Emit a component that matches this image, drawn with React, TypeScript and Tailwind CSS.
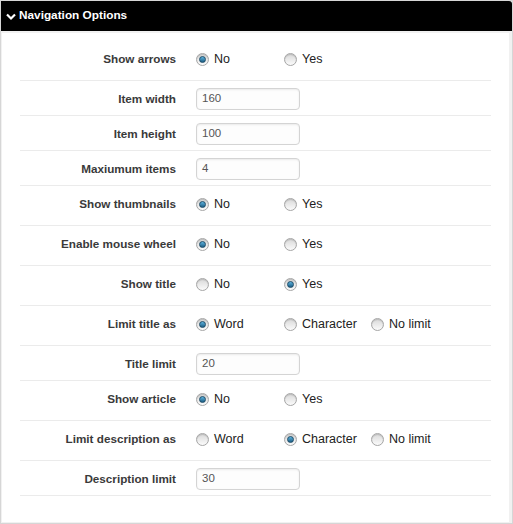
import React from 'react';

type Opt = { label: string; checked?: boolean };

const rows: Array<
  | { kind: 'radio'; label: string; options: Opt[] }
  | { kind: 'input'; label: string; value: string }
> = [
  { kind: 'radio', label: 'Show arrows', options: [{ label: 'No', checked: true }, { label: 'Yes' }] },
  { kind: 'input', label: 'Item width', value: '160' },
  { kind: 'input', label: 'Item height', value: '100' },
  { kind: 'input', label: 'Maxiumum items', value: '4' },
  { kind: 'radio', label: 'Show thumbnails', options: [{ label: 'No', checked: true }, { label: 'Yes' }] },
  { kind: 'radio', label: 'Enable mouse wheel', options: [{ label: 'No', checked: true }, { label: 'Yes' }] },
  { kind: 'radio', label: 'Show title', options: [{ label: 'No' }, { label: 'Yes', checked: true }] },
  {
    kind: 'radio',
    label: 'Limit title as',
    options: [{ label: 'Word', checked: true }, { label: 'Character' }, { label: 'No limit' }],
  },
  { kind: 'input', label: 'Title limit', value: '20' },
  { kind: 'radio', label: 'Show article', options: [{ label: 'No', checked: true }, { label: 'Yes' }] },
  {
    kind: 'radio',
    label: 'Limit description as',
    options: [{ label: 'Word' }, { label: 'Character', checked: true }, { label: 'No limit' }],
  },
  { kind: 'input', label: 'Description limit', value: '30' },
];

function Radio({ checked }: { checked?: boolean }) {
  return (
    <span className="relative flex h-[13px] w-[13px] shrink-0 items-center justify-center rounded-full border border-[#a6a6a6] bg-gradient-to-b from-[#d9d9d9] to-[#fbfbfb] shadow-[inset_0_1px_1px_rgba(0,0,0,0.15)]">
      {checked && (
        <span className="h-[7px] w-[7px] rounded-full border border-[#1b4a66] bg-gradient-to-b from-[#5db3de] to-[#1d5f86]" />
      )}
    </span>
  );
}

const optWidths = ['w-[88px]', 'w-[87px]', 'w-auto'];

export default function App() {
  return (
    <div className="h-[524px] w-[513px] overflow-hidden border border-[#d6d6d6] bg-[#f1f1f1] font-['Liberation_Sans',Arial,sans-serif]">
      {/* Header */}
      <div className="flex h-[30px] items-center gap-[3px] rounded-tr-[3px] bg-black pl-[5px] text-white">
        <svg width="10" height="8" viewBox="0 0 10 8" className="mt-[1px]">
          <polyline points="1,1.5 5,5.5 9,1.5" fill="none" stroke="white" strokeWidth="2.2" />
        </svg>
        <span className="text-[11.8px] font-bold">Navigation Options</span>
      </div>

      {/* Panel */}
      <div className="ml-[1px] mt-[2px] h-[489px] w-[507px] bg-white px-[18px] pt-[8px]">
        {rows.map((r) =>
          r.kind === 'radio' ? (
            <div key={r.label} className="flex h-[40px] items-center border-b border-[#ebebeb] pb-[3px]">
              <div className="w-[156px] text-right text-[11.7px] font-bold text-[#3a3a3a]">{r.label}</div>
              <div className="ml-[20px] flex items-center">
                {r.options.map((o, i) => (
                  <label key={o.label} className={`flex items-center gap-[5px] ${optWidths[i]}`}>
                    <Radio checked={o.checked} />
                    <span className="text-[12.5px] text-[#222]">{o.label}</span>
                  </label>
                ))}
              </div>
            </div>
          ) : (
            <div key={r.label} className="flex h-[35px] items-center border-b border-[#ebebeb] pt-[1px]">
              <div className="w-[156px] text-right text-[11.7px] font-bold text-[#3a3a3a]">{r.label}</div>
              <div className="ml-[20px] flex h-[22px] w-[104px] items-center rounded-[4px] border border-[#d4d4d4] bg-[#fdfdfd] pl-[5px] pt-[1px] text-[11.5px] text-[#555] shadow-[inset_0_1px_2px_rgba(0,0,0,0.08)]">
                {r.value}
              </div>
            </div>
          ),
        )}
      </div>
    </div>
  );
}
